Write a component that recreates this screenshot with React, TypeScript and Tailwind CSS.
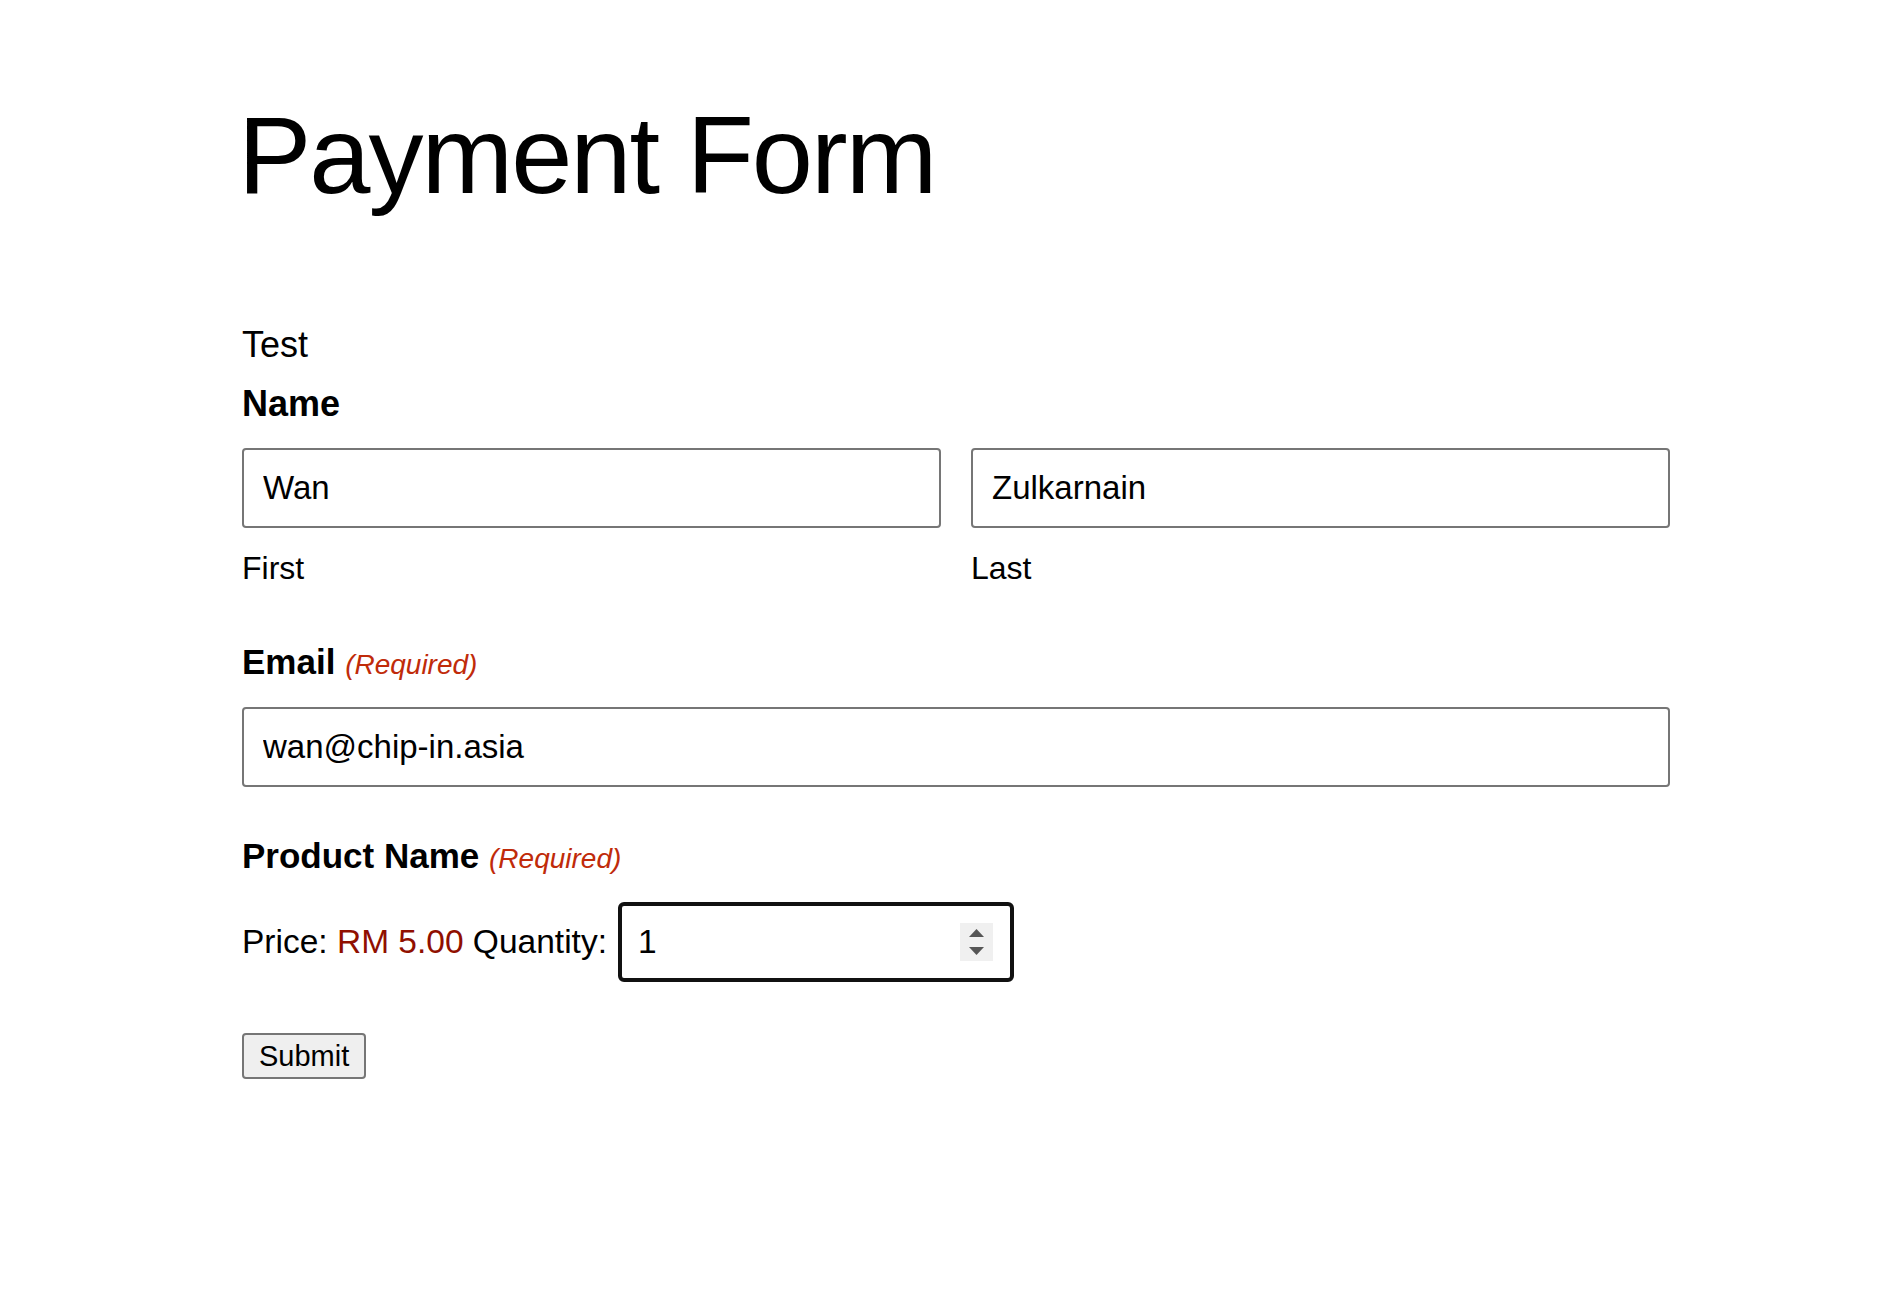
const font = { fontFamily: '"Liberation Sans", Arial, sans-serif' }

function TextField({ value }: { value: string }) {
  return (
    <input
      readOnly
      defaultValue={value}
      className="block w-full h-[80px] px-[19px] border-2 border-[#767676] rounded-[4px] bg-white text-[33px] text-black outline-none"
      style={font}
    />
  )
}

function Spinner() {
  return (
    <div className="w-[33px] h-[38px] bg-[#f0f0f0] flex flex-col items-center justify-center gap-[10px]">
      <svg width="15" height="8" viewBox="0 0 15 8">
        <path d="M7.5 0 L15 8 L0 8 Z" fill="#555" />
      </svg>
      <svg width="15" height="8" viewBox="0 0 15 8">
        <path d="M0 0 L15 0 L7.5 8 Z" fill="#555" />
      </svg>
    </div>
  )
}

export default function App() {
  return (
    <div className="min-h-screen bg-white text-black" style={font}>
      <div className="ml-[242px] w-[1428px] pt-[100px]">
        <h1 className="-ml-[4px] text-[110px] leading-none font-normal tracking-[-2px]">Payment Form</h1>

        <p className="mt-[117px] text-[36px] leading-none">Test</p>

        <div className="mt-[23px] text-[36px] leading-none font-bold">Name</div>
        <div className="mt-[26px] grid grid-cols-2 gap-[30px]">
          <div>
            <TextField value="Wan" />
            <div className="mt-[24px] text-[32px] leading-none">First</div>
          </div>
          <div>
            <TextField value="Zulkarnain" />
            <div className="mt-[24px] text-[32px] leading-none">Last</div>
          </div>
        </div>

        <div className="mt-[60px] text-[35px] leading-none">
          <span className="font-bold">Email</span>{' '}
          <span className="italic text-[28px] text-[#c02b0a]">(Required)</span>
        </div>
        <div className="mt-[28px]">
          <TextField value="wan@chip-in.asia" />
        </div>

        <div className="mt-[51px] text-[35px] leading-none">
          <span className="font-bold">Product Name</span>{' '}
          <span className="italic text-[28px] text-[#c02b0a]">(Required)</span>
        </div>

        <div className="mt-[29px] flex items-center text-[33.5px] leading-none">
          <span>
            Price: <span className="text-[#900f00]">RM 5.00</span> Quantity:
          </span>
          <div className="ml-[11px] w-[396px] h-[80px] border-4 border-[#111] rounded-[6px] bg-white flex items-center justify-between pl-[16px] pr-[17px]">
            <span>1</span>
            <Spinner />
          </div>
        </div>

        <button
          type="button"
          className="mt-[51px] block h-[46px] px-[15px] border-2 border-[#767676] rounded-[4px] bg-[#efefef] text-[29px] leading-none text-black"
          style={font}
        >
          Submit
        </button>
      </div>
    </div>
  )
}
